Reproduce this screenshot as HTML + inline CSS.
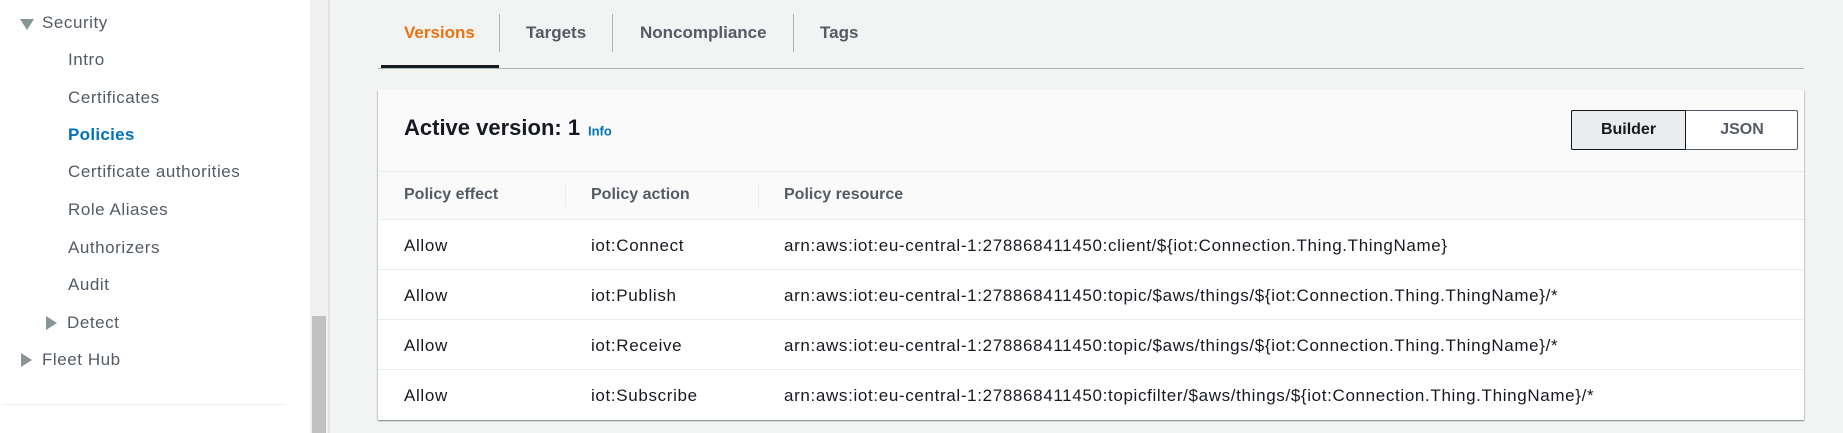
<!DOCTYPE html>
<html><head><style>
*{margin:0;padding:0;box-sizing:border-box}
body{width:1843px;height:433px;overflow:hidden;background:#f2f3f3;font-family:"Liberation Sans",sans-serif;position:relative;color:#16191f}
.a{position:absolute;white-space:nowrap}
.side{position:absolute;left:0;top:0;width:310px;height:433px;background:#fff}
.nav{font-size:17px;letter-spacing:0.55px;color:#545b64;transform:translateY(-50%)}
.tri{width:0;height:0;border-left:11px solid #879596;border-top:7px solid transparent;border-bottom:7px solid transparent}
.tab{font-size:17px;font-weight:bold;color:#545b64;top:33px;transform:translateY(-50%)}
.sep{width:1px;background:#aab7b8}
.cell{font-size:17px;letter-spacing:0.65px;color:#16191f;transform:translateY(-50%)}
.hd{font-size:16px;font-weight:bold;color:#545b64;transform:translateY(-50%)}
.row{left:378px;width:1426px;height:1px;background:#eaeded}
</style></head><body>
<div class="side"></div>
<div class="a tri" style="left:20px;top:19px;border-left:7px solid transparent;border-right:7px solid transparent;border-top:11px solid #879596;border-bottom:0"></div>
<div class="a nav" style="left:42px;top:23px">Security</div>
<div class="a nav" style="left:68px;top:60px">Intro</div>
<div class="a nav" style="left:68px;top:98px">Certificates</div>
<div class="a nav" style="left:68px;top:135px;color:#0073bb;font-weight:bold;letter-spacing:0.3px">Policies</div>
<div class="a nav" style="left:68px;top:172px">Certificate authorities</div>
<div class="a nav" style="left:68px;top:210px">Role Aliases</div>
<div class="a nav" style="left:68px;top:248px">Authorizers</div>
<div class="a nav" style="left:68px;top:285px">Audit</div>
<div class="a tri" style="left:46px;top:316px"></div>
<div class="a nav" style="left:67px;top:323px">Detect</div>
<div class="a tri" style="left:21px;top:353px"></div>
<div class="a nav" style="left:42px;top:360px">Fleet Hub</div>
<div class="a" style="left:3px;top:404px;width:282px;height:1px;background:#eaeded"></div>
<div class="a" style="left:310px;top:0;width:18px;height:433px;background:#f1f1f1"></div>
<div class="a" style="left:312px;top:316px;width:14px;height:117px;background:#c1c1c1"></div>
<div class="a" style="left:328px;top:0;width:2px;height:433px;background:#dfe2e2"></div>

<div class="a tab" style="left:404px;color:#ec7211">Versions</div>
<div class="a sep" style="left:499px;top:14px;height:38px"></div>
<div class="a tab" style="left:526px">Targets</div>
<div class="a sep" style="left:612px;top:14px;height:38px"></div>
<div class="a tab" style="left:640px">Noncompliance</div>
<div class="a sep" style="left:793px;top:14px;height:38px"></div>
<div class="a tab" style="left:820px">Tags</div>
<div class="a" style="left:378px;top:68px;width:1426px;height:1px;background:#aab7b8"></div>
<div class="a" style="left:381px;top:65px;width:118px;height:3px;background:#16191f"></div>

<div class="a" style="left:378px;top:90px;width:1426px;height:330px;background:#fff;box-shadow:0 1px 1px rgba(0,28,36,.3),1px 1px 1px rgba(0,28,36,.15),-1px 1px 1px rgba(0,28,36,.15)"></div>
<div class="a" style="left:378px;top:90px;width:1426px;height:129px;background:#fafafa"></div>
<div class="a row" style="top:171px"></div>
<div class="a row" style="top:219px"></div>
<div class="a row" style="top:269px"></div>
<div class="a row" style="top:319px"></div>
<div class="a row" style="top:369px"></div>
<div class="a" style="left:404px;top:128px;font-size:22px;font-weight:bold;transform:translateY(-50%)">Active version: 1</div>
<div class="a" style="left:588px;top:131px;font-size:13px;font-weight:bold;color:#0073bb;transform:translateY(-50%)">Info</div>
<div class="a" style="left:1571px;top:110px;width:227px;height:40px;border:1px solid #545b64;border-radius:2px;background:#fff"></div>
<div class="a" style="left:1571px;top:110px;width:115px;height:40px;border:1px solid #16191f;border-radius:2px 0 0 2px;background:#eaeded;font-size:16px;font-weight:bold;line-height:38px;text-align:center">Builder</div>
<div class="a" style="left:1686px;top:110px;width:112px;height:40px;font-size:16px;font-weight:bold;color:#545b64;line-height:40px;text-align:center">JSON</div>

<div class="a hd" style="left:404px;top:195px">Policy effect</div>
<div class="a sep" style="left:565px;top:183px;height:24px;background:#eaeded"></div>
<div class="a hd" style="left:591px;top:195px">Policy action</div>
<div class="a sep" style="left:758px;top:183px;height:24px;background:#eaeded"></div>
<div class="a hd" style="left:784px;top:195px">Policy resource</div>

<div class="a cell" style="left:404px;top:246px">Allow</div>
<div class="a cell" style="left:591px;top:246px">iot:Connect</div>
<div class="a cell" style="left:784px;top:246px">arn:aws:iot:eu-central-1:278868411450:client/${iot:Connection.Thing.ThingName}</div>
<div class="a cell" style="left:404px;top:296px">Allow</div>
<div class="a cell" style="left:591px;top:296px">iot:Publish</div>
<div class="a cell" style="left:784px;top:296px">arn:aws:iot:eu-central-1:278868411450:topic/$aws/things/${iot:Connection.Thing.ThingName}/*</div>
<div class="a cell" style="left:404px;top:346px">Allow</div>
<div class="a cell" style="left:591px;top:346px">iot:Receive</div>
<div class="a cell" style="left:784px;top:346px">arn:aws:iot:eu-central-1:278868411450:topic/$aws/things/${iot:Connection.Thing.ThingName}/*</div>
<div class="a cell" style="left:404px;top:396px">Allow</div>
<div class="a cell" style="left:591px;top:396px">iot:Subscribe</div>
<div class="a cell" style="left:784px;top:396px">arn:aws:iot:eu-central-1:278868411450:topicfilter/$aws/things/${iot:Connection.Thing.ThingName}/*</div>
</body></html>
